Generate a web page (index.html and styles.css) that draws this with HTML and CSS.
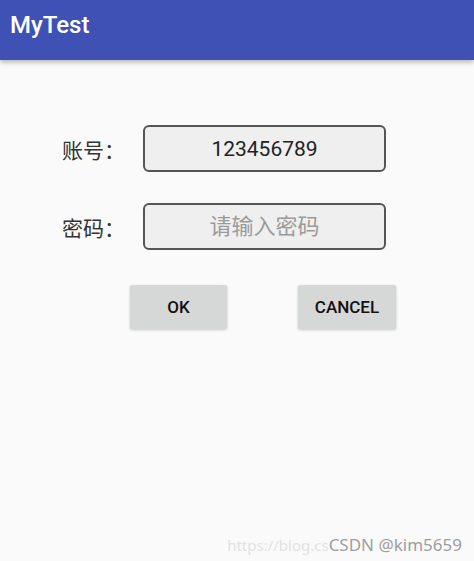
FILE: index.html
```html
<!DOCTYPE html>
<html lang="zh">

<head>
  <meta charset="UTF-8">
  <meta name="viewport" content="width=device-width, initial-scale=1.0">
  <title>MyTest</title>
  <link rel="stylesheet" href="styles.css">
</head>

<body>
  <div class="app">
    <div class="toolbar">MyTest</div>

    <div class="form">
      <div class="row">
        <span class="label">账号：</span>
        <input class="field" type="text" value="123456789">
      </div>
      <div class="row">
        <span class="label">密码：</span>
        <input class="field" type="password" placeholder="请输入密码">
      </div>
      <div class="buttons">
        <button class="btn btn-ok">OK</button>
        <button class="btn btn-cancel">CANCEL</button>
      </div>
    </div>

    <div class="mark">
      <span class="mark-url">https://blog.cs</span>
      <span class="mark-name">CSDN @kim5659</span>
    </div>
  </div>
</body>

</html>
```

FILE: styles.css
```css
* {
  margin: 0px;
  padding: 0px;
  box-sizing: border-box;
}

body {
  background: #fafafa;
  font-family: Roboto, "Noto Sans CJK SC", sans-serif;
}

.app {
  position: relative;
  width: 474px;
  height: 561px;
  overflow: hidden;
}

.toolbar {
  height: 60px;
  padding: 11px 0 0 10px;
  background: #3f51b5;
  color: #fff;
  font-size: 24px;
  font-weight: 500;
  box-shadow: 0 2px 5px rgba(0, 0, 0, 0.3);
}

.form {
  padding: 65px 0 0 62px;
}

.row {
  display: flex;
  align-items: center;
  margin-bottom: 31px;
}

.label {
  width: 81px;
  font-size: 21px;
  color: #333;
  font-family: "Noto Sans CJK SC", sans-serif;
}

.field {
  width: 243px;
  height: 47px;
  border: 2px solid #555;
  border-radius: 6px;
  background: #efefef;
  font-family: Roboto, "Noto Sans CJK SC", sans-serif;
  font-size: 21px;
  color: #222;
  text-align: center;
  outline: none;
}

.field::placeholder {
  font-family: "Noto Sans CJK SC", sans-serif;
  font-size: 22px;
  color: #9a9a9a;
}

.buttons {
  display: flex;
  gap: 71px;
  padding: 4px 0 0 68px;
}

.btn {
  height: 44px;
  border: none;
  border-radius: 2px;
  background: #d6d7d7;
  box-shadow: 0 1px 3px rgba(0, 0, 0, 0.2);
  font-family: Roboto, sans-serif;
  font-size: 17px;
  font-weight: 500;
  color: #111;
}

.btn-ok {
  width: 97px;
}

.btn-cancel {
  width: 98px;
}

.mark {
  position: absolute;
  right: 12px;
  bottom: 5px;
  display: flex;
  align-items: baseline;
  font-family: "Noto Sans", sans-serif;
  white-space: nowrap;
}

.mark-url {
  color: #e2e2e2;
  font-size: 15px;
}

.mark-name {
  color: #9e9e9e;
  font-size: 17px;
}
```
